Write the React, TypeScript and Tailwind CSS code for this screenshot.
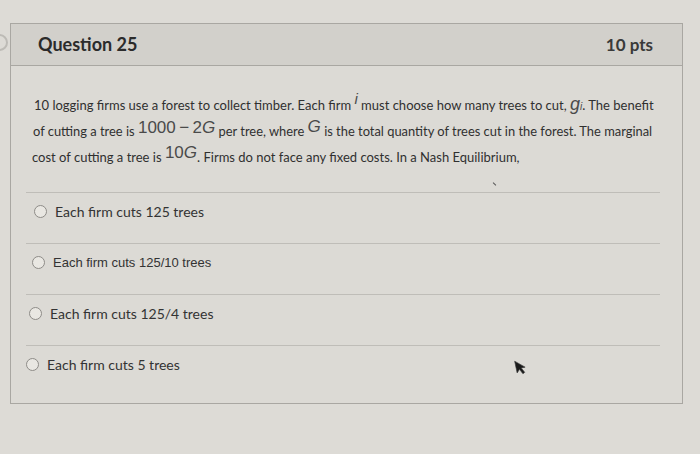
import React from 'react';

const answers = [
  { label: 'Each firm cuts 125 trees', font: 'lato', indent: 'pl-[8px]' },
  { label: 'Each firm cuts 125/10 trees', font: 'arial', indent: 'pl-[6px]' },
  { label: 'Each firm cuts 125/4 trees', font: 'lato', indent: 'pl-[3px]' },
  { label: 'Each firm cuts 5 trees', font: 'lato', indent: 'pl-0' },
];

function Radio() {
  return <span className="inline-block w-[13px] h-[13px] rounded-full border border-[#8e8c88] bg-[#e9e7e2] shrink-0" />;
}

function Cursor() {
  return (
    <svg width="12" height="16" viewBox="0 0 12 16" className="absolute left-[515px] top-[359px] -rotate-12">
      <path d="M1 1 L1 13 L4 10 L6.5 15 L8.5 14 L6 9 L10 9 Z" fill="#1a1a1a" stroke="#3a3a3a" strokeWidth="0.6" />
    </svg>
  );
}

export default function App() {
  const math = "font-['Liberation_Sans',sans-serif] text-[#4a4a4a] leading-[0]";
  return (
    <div className="relative min-h-[454px] w-[700px] overflow-hidden bg-[#dddbd6] pt-[23px] pl-[10px] pr-[17px] font-['Lato',sans-serif] text-[#2f2f2f]">
      {/* collapse toggle peeking from the left */}
      <div className="absolute -left-[9px] top-[34px] w-[17px] h-[17px] rounded-full border-2 border-[#bdbbb6]" />

      <div className="border border-[#a9a7a2] bg-[#dcdad5]">
        {/* header */}
        <div className="flex items-center justify-between h-[42px] bg-[#d2d0cb] border-b border-[#a9a7a2] pl-[27px] pr-[29px]">
          <h2 className="text-[18px] font-bold text-[#2b2b2b]">Question 25</h2>
          <span className="text-[17px] font-bold text-[#3a3a3a]">10 pts</span>
        </div>

        {/* question text */}
        <div className="pt-[26px] pl-[23px] pr-[20px] text-[13px] leading-[26px] text-[#303030]">
          <p className="whitespace-nowrap">
            10 logging firms use a forest to collect timber. Each firm{' '}
            <span className={`${math} italic text-[15px] align-[6px]`}>i</span>{' '}
            must choose how many trees to cut,{' '}
            <span className={`${math} italic text-[18px]`}>g</span>
            <span className={`${math} italic text-[10px]`}>i</span>. The benefit
          </p>
          <p className="whitespace-nowrap -ml-px text-[12.9px]">
            of cutting a tree is{' '}
            <span className={`${math} text-[17px] align-[3px]`}>1000{'\u2009'}−{'\u2009'}2<i>G</i></span>{' '}
            per tree, where{' '}
            <span className={`${math} italic text-[17px] align-[4px]`}>G</span>{' '}
            is the total quantity of trees cut in the forest. The marginal
          </p>
          <p className="whitespace-nowrap -ml-[2px]">
            cost of cutting a tree is{' '}
            <span className={`${math} text-[17px] align-[4px]`}>10<i>G</i></span>. Firms do not face any fixed costs. In a Nash Equilibrium,
          </p>
        </div>

        {/* answers */}
        <div className="mt-[22px] pl-[15px] pr-[22px] pb-[7px]">
          {answers.map((a) => (
            <div
              key={a.label}
              className={`flex items-center gap-[8px] h-[51px] border-t border-[#bfbdb8] pb-[13px] ${a.indent}`}
            >
              <Radio />
              <span
                className={
                  a.font === 'arial'
                    ? "font-['Liberation_Sans',sans-serif] text-[13px] text-[#333]"
                    : 'text-[14px] text-[#333]'
                }
              >
                {a.label}
              </span>
            </div>
          ))}
        </div>
      </div>

      <span className="absolute left-[494px] top-[182px] w-[1px] h-[4px] bg-[#555] -rotate-45" />
      <Cursor />
    </div>
  );
}
